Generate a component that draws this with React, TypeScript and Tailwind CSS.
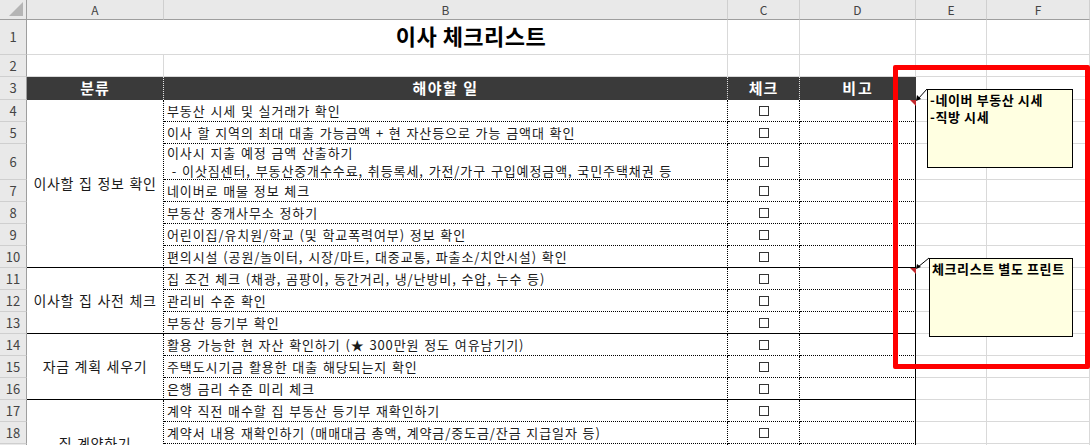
import type { ReactNode } from "react";

const cols = ["A", "B", "C", "D", "E", "F"];

const groups: { label: string; items: (string | string[])[] }[] = [
  {
    label: "이사할 집 정보 확인",
    items: [
      "부동산 시세 및 실거래가 확인",
      "이사 할 지역의 최대 대출 가능금액 + 현 자산등으로 가능 금액대 확인",
      [
        "이사시 지출 예정 금액 산출하기",
        " - 이삿짐센터, 부동산중개수수료, 취등록세, 가전/가구 구입예정금액, 국민주택채권 등",
      ],
      "네이버로 매물 정보 체크",
      "부동산 중개사무소 정하기",
      "어린이집/유치원/학교 (및 학교폭력여부) 정보 확인",
      "편의시설 (공원/놀이터, 시장/마트, 대중교통, 파출소/치안시설) 확인",
    ],
  },
  {
    label: "이사할 집 사전 체크",
    items: [
      "집 조건 체크 (채광, 곰팡이, 동간거리, 냉/난방비, 수압, 누수 등)",
      "관리비 수준 확인",
      "부동산 등기부 확인",
    ],
  },
  {
    label: "자금 계획 세우기",
    items: [
      "활용 가능한 현 자산 확인하기 (★ 300만원 정도 여유남기기)",
      "주택도시기금 활용한 대출 해당되는지 확인",
      "은행 금리 수준 미리 체크",
    ],
  },
  {
    label: "집 계약하기",
    items: [
      "계약 직전 매수할 집 부동산 등기부 재확인하기",
      "계약서 내용 재확인하기 (매매대금 총액, 계약금/중도금/잔금 지급일자 등)",
      "",
      "",
    ],
  },
];

function RowHead({ n }: { n: number }) {
  return (
    <div className="flex items-center justify-center bg-[#e9e9e9] border-r border-r-[#9e9e9e] border-b border-b-[#cfcfcf] text-[13px] text-[#444]">
      {n < 19 ? n : null}
    </div>
  );
}

function Grid({ className = "", children }: { className?: string; children?: ReactNode }) {
  return <div className={`border-r border-b border-[#d9d9d9] ${className}`}>{children}</div>;
}

function CheckBox() {
  return <span className="inline-block w-[10px] h-[10px] border border-[#333]" />;
}

export default function App() {
  let rowNo = 4;

  return (
    <div className="relative w-[1090px] h-[445px] overflow-hidden bg-white font-['Noto_Sans_CJK_KR','Malgun_Gothic',sans-serif] text-[#1a1a1a]">
      <div className="grid grid-cols-[27px_137px_564px_72px_116px_71px_103px] grid-rows-[20px_35px_22px_23px_22px_22px_36px_repeat(14,22px)]">
        {/* column headers */}
        <div className="relative bg-[#e9e9e9] border-r border-b border-[#9e9e9e]">
          <div className="absolute right-[3px] bottom-[3px] w-0 h-0 border-l-[14px] border-l-transparent border-b-[14px] border-b-[#b5b5b5]" />
        </div>
        {cols.map((c) => (
          <div
            key={c}
            className="flex items-center justify-center bg-[#e9e9e9] border-r border-r-[#cfcfcf] border-b border-b-[#9e9e9e] text-[12px] text-[#444]"
          >
            {c}
          </div>
        ))}

        {/* row 1 */}
        <RowHead n={1} />
        <Grid className="col-span-2 flex items-end justify-center pl-[188px] pb-[2px] text-[22px] font-bold text-black tracking-[0.5px]">
          이사 체크리스트
        </Grid>
        <Grid />
        <Grid />
        <Grid />
        <Grid />

        {/* row 2 */}
        <RowHead n={2} />
        <Grid />
        <Grid />
        <Grid />
        <Grid />
        <Grid />
        <Grid />

        {/* row 3 header */}
        <RowHead n={3} />
        <div className="flex items-center justify-center bg-[#3a3a3a] border-r [border-right-style:dotted] border-r-[#e5e5e5] text-[15px] font-bold text-white tracking-[1px]">
          분류
        </div>
        <div className="flex items-center justify-center bg-[#3a3a3a] border-r [border-right-style:dotted] border-r-[#e5e5e5] text-[15px] font-bold text-white tracking-[1.5px]">
          해야할 일
        </div>
        <div className="flex items-center justify-center bg-[#3a3a3a] border-r [border-right-style:dotted] border-r-[#e5e5e5] text-[15px] font-bold text-white tracking-[1px]">
          체크
        </div>
        <div className="flex items-center justify-center bg-[#3a3a3a] text-[15px] font-bold text-white tracking-[2px]">
          비고
        </div>
        <Grid />
        <Grid />

        {groups.map((g) =>
          g.items.map((item, i) => {
            const n = rowNo++;
            const last = i === g.items.length - 1;
            const bottom = last
              ? "border-b [border-bottom-style:solid] border-b-black"
              : "border-b [border-bottom-style:dotted] border-b-black";
            return [
              <RowHead key={`h${n}`} n={n} />,
              i === 0 ? (
                <div
                  key={`a${n}`}
                  style={{ gridRow: `span ${g.items.length}` }}
                  className="flex items-center justify-center border-r [border-right-style:dotted] border-r-black border-b [border-bottom-style:solid] border-b-black text-[14px] tracking-[0.7px] [word-spacing:1px]"
                >
                  {g.label}
                </div>
              ) : null,
              <div
                key={`b${n}`}
                className={`flex flex-col justify-center pl-[3px] border-r [border-right-style:dotted] border-r-black ${bottom} text-[13px] leading-[18px] tracking-[0.9px] [word-spacing:1px] whitespace-pre overflow-hidden`}
              >
                {Array.isArray(item) ? item.map((t) => <span key={t}>{t}</span>) : <span>{item}</span>}
              </div>,
              <div
                key={`c${n}`}
                className={`flex items-center justify-center border-r [border-right-style:dotted] border-r-black ${bottom}`}
              >
                <CheckBox />
              </div>,
              <div key={`d${n}`} className={`border-r [border-right-style:solid] border-r-black ${bottom}`} />,
              <Grid key={`e${n}`} />,
              <Grid key={`f${n}`} />,
            ];
          })
        )}
      </div>

      {/* comment pointers */}
      <svg className="absolute left-0 top-0 pointer-events-none" width="1090" height="445">
        <polygon points="910,100 916,100 916,106" fill="#c0282d" />
        <polygon points="910,268 916,268 916,274" fill="#c0282d" />
        <line x1="927" y1="89" x2="918" y2="99" stroke="#000" strokeWidth="1" />
        <polygon points="916,101 917,95 921,99" fill="#000" />
        <line x1="929" y1="258" x2="918" y2="267" stroke="#000" strokeWidth="1" />
        <polygon points="916,269 917,264 921,267" fill="#000" />
      </svg>

      {/* comment notes */}
      <div className="absolute left-[927px] top-[89px] w-[146px] h-[79px] bg-[#ffffe1] border border-black px-[2px] pt-[1px] text-[13px] leading-[17px] font-bold text-black tracking-[0.6px]">
        <div>-네이버 부동산 시세</div>
        <div>-직방 시세</div>
      </div>
      <div className="absolute left-[929px] top-[258px] w-[144px] h-[79px] bg-[#ffffe1] border border-black px-[2px] pt-[1px] text-[13px] leading-[17px] font-bold text-black tracking-[0.6px]">
        체크리스트 별도 프린트
      </div>

      {/* red highlight frame */}
      <div className="absolute left-[893px] top-[65px] w-[197px] h-[304px] border-[5px] border-[#ff0000] rounded-[2px] pointer-events-none" />
    </div>
  );
}
